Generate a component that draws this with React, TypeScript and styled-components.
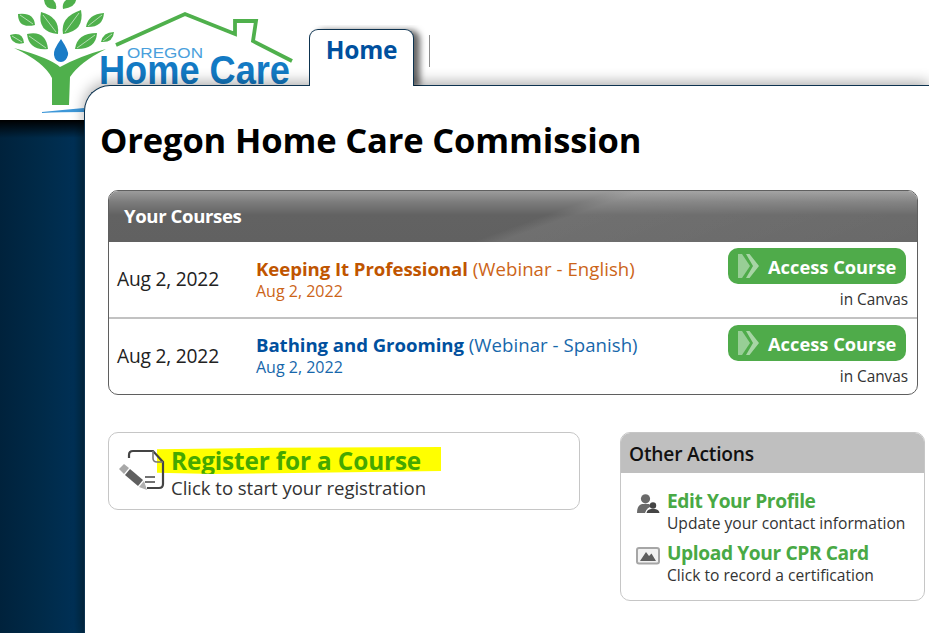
import React from "react";
import styled, { createGlobalStyle } from "styled-components";

const Global = createGlobalStyle`
  html, body { margin: 0; padding: 0; background: #fff; }
  body { font-family: "Open Sans", "Noto Sans", "Liberation Sans", sans-serif; color: #222; }
  a { text-decoration: none; color: inherit; }
`;

const Page = styled.div`
  width: 929px;
  height: 633px;
  overflow: hidden;
  background:
    linear-gradient(to bottom, #fff 0, #fff 120px, rgba(0,0,0,1) 120px, rgba(0,0,0,0) 138px) no-repeat,
    linear-gradient(to right, #00223c 0, #002a48 40px, #003055 74px, #022a46 84px, #fff 84px);
`;

const Header = styled.header`
  height: 85px;
  display: flex;
  align-items: flex-end;
  padding-left: 309px;
  box-sizing: border-box;
  position: relative;
`;

const Logo = styled.svg`
  position: absolute;
  left: 0;
  top: 0;
  width: 300px;
  height: 120px;
`;

const Tab = styled.a`
  position: relative;
  z-index: 3;
  width: 105px;
  height: 57px;
  margin-bottom: -1px;
  box-sizing: border-box;
  border: 1px solid #0d3350;
  border-bottom: 0;
  border-radius: 9px 9px 0 0;
  background: #fff;
  color: #00509e;
  font-size: 24.5px;
  font-weight: 700;
  letter-spacing: -0.2px;
  text-align: center;
  line-height: 39px;
  box-shadow: 6px 1px 6px rgba(0,0,0,.6);
  clip-path: inset(-4px -16px 0 0);
`;

const TabDivider = styled.span`
  align-self: flex-start;
  width: 1px;
  height: 32px;
  margin: 35px 0 0 15px;
  background: #8c8c8c;
  position: relative;
  z-index: 3;
`;

const Panel = styled.main`
  position: relative;
  z-index: 2;
  margin-left: 84px;
  height: 548px;
  box-sizing: border-box;
  background: #fff;
  border-top: 1px solid #0d3350;
  border-left: 1px solid #0d3350;
  border-top-left-radius: 26px;
  padding: 31px 4px 0 15px;
  box-shadow: 0 -3px 14px rgba(0,0,0,.32);
`;

const Title = styled.h1`
  margin: 0 0 27px;
  font-size: 34.5px;
  line-height: 46px;
  font-weight: 700;
  color: #000;
  letter-spacing: -0.15px;
  white-space: nowrap;
`;

const Courses = styled.section`
  margin: 0 0 37px 8px;
  width: 810px;
  height: 205px;
  box-sizing: border-box;
  border: 1px solid #5f5f5f;
  border-radius: 10px;
  overflow: hidden;
`;

const CoursesHead = styled.div`
  height: 51px;
  box-sizing: border-box;
  padding: 0 15px 2px;
  display: flex;
  align-items: center;
  font-size: 18.6px;
  font-weight: 700;
  letter-spacing: -0.4px;
  color: #fff;
  background:
    linear-gradient(160deg, rgba(255,255,255,0) 53%, rgba(255,255,255,.09) 56%, rgba(255,255,255,.05) 100%),
    linear-gradient(to bottom, #9c9c9c 0, #7c7c7c 11px, #626262 24px, #616161 100%);
`;

const Row = styled.div<{ $last?: boolean }>`
  height: ${(p) => (p.$last ? 74 : 77)}px;
  box-sizing: border-box;
  display: grid;
  grid-template-columns: 139px 1fr auto;
  padding: 6px 11px 0 8px;
  border-bottom: ${(p) => (p.$last ? "0" : "2px solid #c2c2c2")};
`;

const DateCell = styled.div`
  font-size: 19.2px;
  letter-spacing: -0.2px;
  line-height: 26px;
  padding-top: 18px;
  color: #222;
`;

const CourseInfo = styled.div<{ $tone: string; $soft: string; $last?: boolean }>`
  color: ${(p) => p.$soft};
  padding-top: ${(p) => (p.$last ? 7 : 8)}px;
  b {
    color: ${(p) => p.$tone};
    font-weight: 700;
    letter-spacing: -0.05px;
  }
`;

const CourseName = styled.div`
  font-size: 18.6px;
  line-height: 26px;
  letter-spacing: 0.05px;
  white-space: nowrap;
`;

const CourseDate = styled.div`
  font-size: 16px;
  line-height: 18px;
`;

const ActionCell = styled.div`
  display: flex;
  flex-direction: column;
  align-items: flex-end;
`;

const AccessButton = styled.a`
  width: 178px;
  height: 36px;
  box-sizing: border-box;
  border-radius: 10px;
  background: #4fab4a;
  color: #fff;
  display: flex;
  align-items: center;
  gap: 8px;
  padding-left: 10px;
  font-size: 18.3px;
  font-weight: 700;
  letter-spacing: 0;
  white-space: nowrap;
`;

const Canvas = styled.div`
  font-size: 15.4px;
  line-height: 20px;
  margin: 6px -2px 0 0;
  letter-spacing: -0.05px;
  color: #333;
`;

const Lower = styled.div`
  display: flex;
  align-items: flex-start;
  margin-left: 8px;
  gap: 40px;
`;

const RegisterCard = styled.a`
  width: 472px;
  height: 78px;
  flex: none;
  box-sizing: border-box;
  border: 1px solid #c6c6c6;
  border-radius: 10px;
  display: flex;
  padding: 14px 0 0 8px;
`;

const RegisterIcon = styled.svg`
  width: 48px;
  height: 44px;
  flex: none;
  margin-top: 1px;
  position: relative;
  z-index: 1;
`;

const RegisterText = styled.div`
  margin-left: 6px;
`;

const Marker = styled.div`
  display: inline-block;
  margin-left: -14px;
  padding: 0 20px 0 14px;
  height: 28px;
  line-height: 27px;
  background: #ffff00;
  color: #45a800;
  font-size: 24.3px;
  font-weight: 700;
  letter-spacing: -0.12px;
  white-space: nowrap;
  clip-path: polygon(0 8%, 40% 3%, 100% 0, 100% 86%, 55% 92%, 20% 96%, 0 92%);
`;

const RegisterHint = styled.div`
  font-size: 18.6px;
  line-height: 24px;
  letter-spacing: -0.05px;
  color: #333;
  margin-top: 1px;
`;

const Others = styled.aside`
  width: 305px;
  height: 169px;
  flex: none;
  box-sizing: border-box;
  border: 1px solid #c6c6c6;
  border-radius: 10px;
  overflow: hidden;
`;

const OthersHead = styled.div`
  height: 40px;
  background: #bfbfbf;
  color: #111;
  font-size: 19.2px;
  font-weight: 600;
  letter-spacing: -0.2px;
  line-height: 41px;
  padding-left: 8px;
`;

const OthersList = styled.div`
  padding: 16px 0 0 15px;
  display: flex;
  flex-direction: column;
  gap: 8px;
`;

const ActionItem = styled.a`
  display: flex;
  gap: 7px;
`;

const ActionIcon = styled.svg<{ $top: number }>`
  width: 24px;
  height: 24px;
  flex: none;
  margin-top: ${(p) => p.$top}px;
`;

const ActionTitle = styled.div`
  color: #49a945;
  font-size: 19.2px;
  font-weight: 700;
  line-height: 24px;
  letter-spacing: -0.4px;
  white-space: nowrap;
`;

const ActionHint = styled.div`
  font-size: 15.6px;
  line-height: 20px;
  color: #333;
  white-space: nowrap;
`;

const leaves = [
  "M18 14 Q34 12 35 25 Q18 29 18 14Z",
  "M41 12 Q60 17 58 34 Q37 32 41 12Z",
  "M81 10 Q85 31 63 34 Q60 17 81 10Z",
  "M104 13 Q103 28 86 27 Q88 14 104 13Z",
  "M10 35 Q23 31 24 43 Q12 46 10 35Z",
  "M27 34 Q46 30 48 49 Q29 51 27 34Z",
  "M97 33 Q96 50 75 49 Q77 33 97 33Z",
  "M114 32 Q113 43 101 42 Q103 32 114 32Z",
  "M44 -4 Q58 -1 56 9 Q43 10 44 -4Z",
  "M76 -4 Q78 7 63 9 Q61 -1 76 -4Z",
];

const ribs = [
  "M20 15 L33 24",
  "M43 15 L56 32",
  "M79 13 L65 32",
  "M102 15 L88 26",
  "M12 36 L22 42",
  "M29 36 L46 48",
  "M95 35 L77 48",
  "M112 34 L103 41",
];

const LogoMark = () => (
  <Logo viewBox="0 0 300 120" aria-label="Oregon Home Care logo">
    {leaves.map((d) => (
      <path key={d} d={d} fill="#4fb04c" />
    ))}
    {ribs.map((d) => (
      <path key={d} d={d} stroke="#bfe3bd" strokeWidth="0.9" fill="none" />
    ))}
    <path d="M61 39 Q69 51 68 55 Q66 62 61 62 Q55 62 54 55 Q53 50 61 39Z" fill="#1b7cc6" />
    <path
      d="M14 48 Q50 58 60 67 Q80 56 106 49 Q80 62 70 77 L69 105 L52 105 L52 78 Q44 62 14 48Z"
      fill="#4fb04c"
    />
    <path d="M42 112 Q62 110 84 108 L84 112 Q60 112 42 113Z" fill="#3d97d8" />
    <path
      d="M116 45 L185 14 L235 34 L235 21 L256 21 L253 41 L292 61"
      fill="none"
      stroke="#4fb04c"
      strokeWidth="3.8"
    />
    <text
      x="127"
      y="58"
      fontFamily="Liberation Sans, sans-serif"
      fontSize="15.5"
      fill="#4a9fdc"
      textLength="76"
      lengthAdjust="spacingAndGlyphs"
    >
      OREGON
    </text>
    <text
      x="99"
      y="84"
      fontFamily="Liberation Sans, sans-serif"
      fontWeight="700"
      fontSize="40"
      fill="#137ac4"
      textLength="191"
      lengthAdjust="spacingAndGlyphs"
    >
      Home Care
    </text>
  </Logo>
);

const Chevrons = () => (
  <svg width="22" height="24" viewBox="0 0 22 24" style={{ flex: "none" }}>
    <path d="M0 0 H4 L12 12 L4 24 H0Z" fill="#fff" opacity=".42" />
    <path d="M8 0 H11.5 L21 12 L11.5 24 H8 L15 12Z" fill="#fff" opacity=".5" />
  </svg>
);

const FormIcon = () => (
  <RegisterIcon viewBox="0 0 48 44">
    <g fill="none" stroke="#444" strokeWidth="2.2">
      <path d="M12 10 V7 Q12 3 16 3 H36 L46 14 V36 Q46 40 42 40 H30" />
      <path d="M36 3 V10 Q36 14 40 14 H46" stroke="#777" strokeWidth="1.6" />
      <path d="M28 29 H38 M28 34 H38" strokeWidth="1.6" />
    </g>
    <path d="M2 21 L7 16 L12 20 L7 26Z" fill="#a8a8a8" />
    <path d="M8 27 L13 21 L26 32 L21 38Z" fill="#5f5f5f" />
    <path d="M22 39 L27 33 L30 42Z" fill="#b0b0b0" />
  </RegisterIcon>
);

const PeopleIcon = () => (
  <ActionIcon viewBox="0 0 24 24" $top={5}>
    <circle cx="9.5" cy="4.8" r="4.6" fill="#6a6a6a" />
    <path d="M1 19 Q1 11 6 10 L13 10 Q15 11 14 13 Q10 15 9 19Z" fill="#6a6a6a" />
    <circle cx="17" cy="11.5" r="3.2" fill="#444" />
    <path d="M10.5 19 Q11 15.5 15 15 L19 15 Q23 15.5 23.5 19Z" fill="#444" />
  </ActionIcon>
);

const PictureIcon = () => (
  <ActionIcon viewBox="0 0 24 24" $top={5}>
    <rect x="1" y="2" width="22" height="15.5" rx="2" fill="#f2f2f2" stroke="#a6a6a6" strokeWidth="2" />
    <path d="M4 15 L10 6 L13 10 L15.5 7.5 L20 15Z" fill="#5f5f5f" />
  </ActionIcon>
);

const courses = [
  { tone: "#c05500", soft: "#cc6418", name: "Keeping It Professional", kind: "(Webinar - English)" },
  { tone: "#00509e", soft: "#1767ab", name: "Bathing and Grooming", kind: "(Webinar - Spanish)" },
];

export default function App() {
  return (
    <Page>
      <Global />
      <Header>
        <LogoMark />
        <Tab href="#">Home</Tab>
        <TabDivider />
      </Header>
      <Panel>
        <Title>Oregon Home Care Commission</Title>
        <Courses>
          <CoursesHead>Your Courses</CoursesHead>
          {courses.map((c, i) => {
            const last = i === courses.length - 1;
            return (
              <Row key={c.name} $last={last}>
                <DateCell>Aug 2, 2022</DateCell>
                <CourseInfo $tone={c.tone} $soft={c.soft} $last={last}>
                  <CourseName>
                    <b>{c.name}</b> {c.kind}
                  </CourseName>
                  <CourseDate>Aug 2, 2022</CourseDate>
                </CourseInfo>
                <ActionCell>
                  <AccessButton href="#">
                    <Chevrons />
                    Access Course
                  </AccessButton>
                  <Canvas>in Canvas</Canvas>
                </ActionCell>
              </Row>
            );
          })}
        </Courses>
        <Lower>
          <RegisterCard href="#">
            <FormIcon />
            <RegisterText>
              <Marker>Register for a Course</Marker>
              <RegisterHint>Click to start your registration</RegisterHint>
            </RegisterText>
          </RegisterCard>
          <Others>
            <OthersHead>Other Actions</OthersHead>
            <OthersList>
              <ActionItem href="#">
                <PeopleIcon />
                <div>
                  <ActionTitle>Edit Your Profile</ActionTitle>
                  <ActionHint>Update your contact information</ActionHint>
                </div>
              </ActionItem>
              <ActionItem href="#">
                <PictureIcon />
                <div>
                  <ActionTitle>Upload Your CPR Card</ActionTitle>
                  <ActionHint>Click to record a certification</ActionHint>
                </div>
              </ActionItem>
            </OthersList>
          </Others>
        </Lower>
      </Panel>
    </Page>
  );
}
